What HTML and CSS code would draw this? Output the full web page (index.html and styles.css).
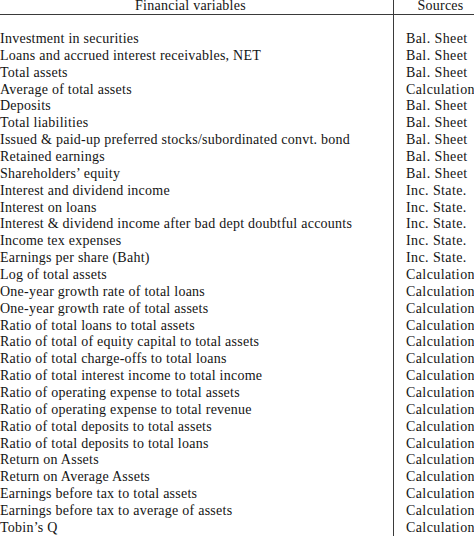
FILE: index.html
```html
<!DOCTYPE html>
<html>
<head>
<meta charset="utf-8">
<link rel="stylesheet" href="styles.css">
</head>
<body>
<div class="table">
  <div class="col vars">
    <div class="head">Financial variables</div>
    <ul class="cells">
      <li>Investment in securities</li>
      <li>Loans and accrued interest receivables, NET</li>
      <li>Total assets</li>
      <li>Average of total assets</li>
      <li>Deposits</li>
      <li>Total liabilities</li>
      <li>Issued &amp; paid-up preferred stocks/subordinated convt. bond</li>
      <li>Retained earnings</li>
      <li>Shareholders’ equity</li>
      <li>Interest and dividend income</li>
      <li>Interest on loans</li>
      <li>Interest &amp; dividend income after bad dept doubtful accounts</li>
      <li>Income tex expenses</li>
      <li>Earnings per share (Baht)</li>
      <li>Log of total assets</li>
      <li>One-year growth rate of total loans</li>
      <li>One-year growth rate of total assets</li>
      <li>Ratio of total loans to total assets</li>
      <li>Ratio of total of equity capital to total assets</li>
      <li>Ratio of total charge-offs to total loans</li>
      <li>Ratio of total interest income to total income</li>
      <li>Ratio of operating expense to total assets</li>
      <li>Ratio of operating expense to total revenue</li>
      <li>Ratio of total deposits to total assets</li>
      <li>Ratio of total deposits to total loans</li>
      <li>Return on Assets</li>
      <li>Return on Average Assets</li>
      <li>Earnings before tax to total assets</li>
      <li>Earnings before tax to average of assets</li>
      <li>Tobin’s Q</li>
    </ul>
  </div>
  <div class="col src">
    <div class="head">Sources</div>
    <ul class="cells">
      <li>Bal. Sheet</li>
      <li>Bal. Sheet</li>
      <li>Bal. Sheet</li>
      <li>Calculation</li>
      <li>Bal. Sheet</li>
      <li>Bal. Sheet</li>
      <li>Bal. Sheet</li>
      <li>Bal. Sheet</li>
      <li>Bal. Sheet</li>
      <li>Inc. State.</li>
      <li>Inc. State.</li>
      <li>Inc. State.</li>
      <li>Inc. State.</li>
      <li>Inc. State.</li>
      <li>Calculation</li>
      <li>Calculation</li>
      <li>Calculation</li>
      <li>Calculation</li>
      <li>Calculation</li>
      <li>Calculation</li>
      <li>Calculation</li>
      <li>Calculation</li>
      <li>Calculation</li>
      <li>Calculation</li>
      <li>Calculation</li>
      <li>Calculation</li>
      <li>Calculation</li>
      <li>Calculation</li>
      <li>Calculation</li>
      <li>Calculation</li>
    </ul>
  </div>
</div>
</body>
</html>
```

FILE: styles.css
```css
html, body {
  margin: 0;
  padding: 0;
  background: #ffffff;
  overflow: hidden;
}
body {
  width: 474px;
  height: 536px;
  font-family: "Liberation Serif", "Times New Roman", serif;
  font-size: 14px;
  letter-spacing: 0.25px;
  line-height: 17px;
  color: #141414;
}
.table {
  display: flex;
  width: 487px;
  height: 560px;
  margin-top: -4px;
}
.col {
  display: flex;
  flex-direction: column;
}
.vars {
  width: 394px;
  box-sizing: border-box;
  border-right: 1px solid #3a3a3a;
}
.src {
  width: 93px;
}
.head {
  height: 17px;
  margin-top: 1px;
  border-bottom: 1px solid #3a3a3a;
  text-align: center;
  white-space: nowrap;
}
.vars .head {
  padding-right: 12px;
}
.cells {
  list-style: none;
  margin: 15px 0 0 0;
  padding: 0;
}
.cells li {
  height: 16.86px;
  white-space: nowrap;
}
.src .cells li {
  padding-left: 12px;
  letter-spacing: 0.4px;
}
```
